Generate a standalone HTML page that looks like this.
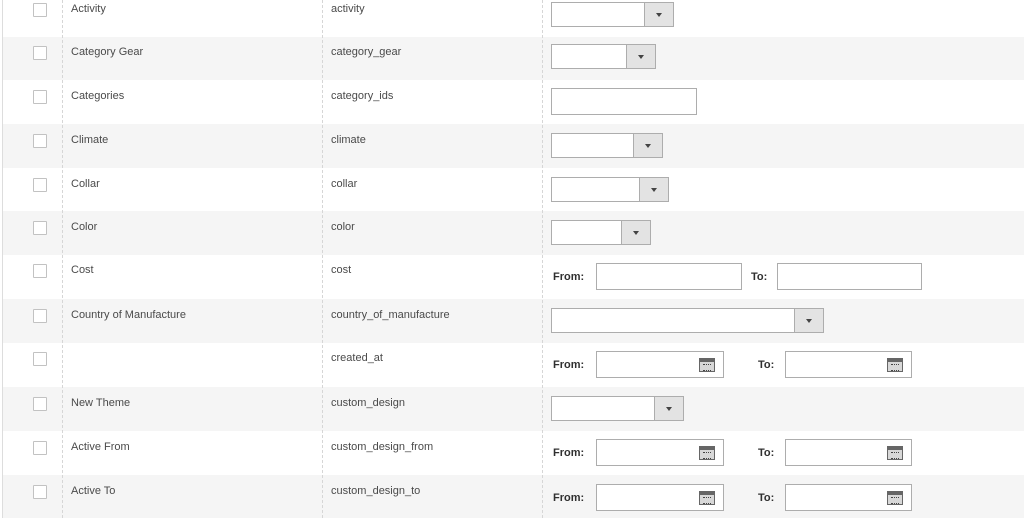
<!DOCTYPE html><html><head><style>
body{margin:0;width:1024px;height:518px;overflow:hidden;background:#fff;font-family:"Liberation Sans",sans-serif;position:relative}
.a{position:absolute}
.row{position:absolute;left:3px;right:0}
.g{background:#f5f5f5}
.vl{position:absolute;top:0;height:518px;border-left:1px dashed #d6d6d6}
.cb{position:absolute;left:33px;width:12px;height:12px;border:1px solid #c2c2c2;background:#fff;border-radius:1px}
.t{position:absolute;font-size:11px;color:#4a4a4a}
.sel{position:absolute;border:1px solid #adadad;background:#fff;height:25px;box-sizing:border-box}
.sel i{position:absolute;right:0;top:0;bottom:0;width:28px;background:#e3e3e3;border-left:1px solid #adadad}
.sel i:after{content:"";position:absolute;left:11px;top:10px;border:3.5px solid transparent;border-top:4px solid #444}
.inp{position:absolute;border:1px solid #adadad;background:#fff;height:27px;box-sizing:border-box}
.lb{position:absolute;font-size:11px;font-weight:bold;color:#303030}
.cal{position:absolute;right:8px;top:6px;width:16px;height:14px;background:#d8d8d8;border:1px solid #666;box-sizing:border-box}
.cal:before{content:"";position:absolute;left:0;right:0;top:0;height:3px;background:#666}
.cal:after{content:"";position:absolute;left:3px;top:5px;width:8px;height:5px;border-top:1px dotted #444;border-bottom:1px dotted #444}
</style></head><body>
<div class="a" style="left:2px;top:0;height:518px;border-left:1px solid #ddd"></div>
<div class="row g" style="top:37px;height:43px"></div>
<div class="row g" style="top:124px;height:44px"></div>
<div class="row g" style="top:211px;height:44px"></div>
<div class="row g" style="top:299px;height:44px"></div>
<div class="row g" style="top:387px;height:44px"></div>
<div class="row g" style="top:475px;height:43px"></div>
<div class="vl" style="left:62px"></div><div class="vl" style="left:322px"></div><div class="vl" style="left:542px"></div>

<div class="cb" style="top:3px"></div><div class="t" style="left:71px;top:3px">Activity</div><div class="t" style="left:331px;top:3px">activity</div>
<div class="cb" style="top:46px"></div><div class="t" style="left:71px;top:46px">Category Gear</div><div class="t" style="left:331px;top:46px">category_gear</div>
<div class="cb" style="top:90px"></div><div class="t" style="left:71px;top:90px">Categories</div><div class="t" style="left:331px;top:90px">category_ids</div>
<div class="cb" style="top:134px"></div><div class="t" style="left:71px;top:134px">Climate</div><div class="t" style="left:331px;top:134px">climate</div>
<div class="cb" style="top:178px"></div><div class="t" style="left:71px;top:178px">Collar</div><div class="t" style="left:331px;top:178px">collar</div>
<div class="cb" style="top:221px"></div><div class="t" style="left:71px;top:221px">Color</div><div class="t" style="left:331px;top:221px">color</div>
<div class="cb" style="top:264px"></div><div class="t" style="left:71px;top:264px">Cost</div><div class="t" style="left:331px;top:264px">cost</div>
<div class="cb" style="top:309px"></div><div class="t" style="left:71px;top:309px">Country of Manufacture</div><div class="t" style="left:331px;top:309px">country_of_manufacture</div>
<div class="cb" style="top:352px"></div><div class="t" style="left:331px;top:352px">created_at</div>
<div class="cb" style="top:397px"></div><div class="t" style="left:71px;top:397px">New Theme</div><div class="t" style="left:331px;top:397px">custom_design</div>
<div class="cb" style="top:441px"></div><div class="t" style="left:71px;top:441px">Active From</div><div class="t" style="left:331px;top:441px">custom_design_from</div>
<div class="cb" style="top:485px"></div><div class="t" style="left:71px;top:485px">Active To</div><div class="t" style="left:331px;top:485px">custom_design_to</div>

<div class="sel" style="left:551px;top:2px;width:123px"><i></i></div>
<div class="sel" style="left:551px;top:44px;width:105px"><i></i></div>
<div class="inp" style="left:551px;top:88px;width:146px"></div>
<div class="sel" style="left:551px;top:133px;width:112px"><i></i></div>
<div class="sel" style="left:551px;top:177px;width:118px"><i></i></div>
<div class="sel" style="left:551px;top:220px;width:100px"><i></i></div>
<div class="lb" style="left:553px;top:271px">From:</div><div class="inp" style="left:596px;top:263px;width:146px"></div>
<div class="lb" style="left:751px;top:271px">To:</div><div class="inp" style="left:777px;top:263px;width:145px"></div>
<div class="sel" style="left:551px;top:308px;width:273px"><i></i></div>
<div class="lb" style="left:553px;top:359px">From:</div><div class="inp" style="left:596px;top:351px;width:128px"><div class="cal"></div></div>
<div class="lb" style="left:758px;top:359px">To:</div><div class="inp" style="left:785px;top:351px;width:127px"><div class="cal"></div></div>
<div class="sel" style="left:551px;top:396px;width:133px"><i></i></div>
<div class="lb" style="left:553px;top:447px">From:</div><div class="inp" style="left:596px;top:439px;width:128px"><div class="cal"></div></div>
<div class="lb" style="left:758px;top:447px">To:</div><div class="inp" style="left:785px;top:439px;width:127px"><div class="cal"></div></div>
<div class="lb" style="left:553px;top:492px">From:</div><div class="inp" style="left:596px;top:484px;width:128px"><div class="cal"></div></div>
<div class="lb" style="left:758px;top:492px">To:</div><div class="inp" style="left:785px;top:484px;width:127px"><div class="cal"></div></div>
</body></html>
